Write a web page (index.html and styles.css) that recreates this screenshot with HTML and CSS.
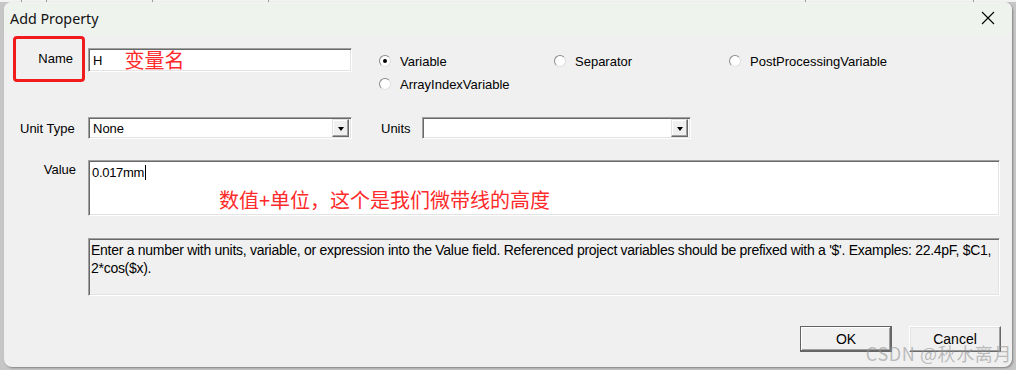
FILE: index.html
```html
<!DOCTYPE html>
<html>
<head>
<meta charset="utf-8">
<link rel="stylesheet" href="styles.css">
</head>
<body>
<div class="topstrip"><span class="tl l1"></span><span class="tl l2"></span><span class="tl l3"></span><span class="tl l4"></span><span class="tl l5"></span><span class="tl l6"></span></div>
<div class="dialog">
  <div class="titlebar">
    <span class="title">Add Property</span>
    <svg class="close" width="14" height="14" viewBox="0 0 14 14"><path d="M1 1 L13 13 M13 1 L1 13" stroke="#000" stroke-width="1.1" fill="none"/></svg>
  </div>
  <div class="body">
    <div class="row1">
      <div class="namebox"><span>Name</span></div>
      <div class="field name-input"><span class="val">H</span><span class="anno anno1">变量名</span></div>
      <div class="radios">
        <label class="radio"><span class="dot on"></span>Variable</label>
        <label class="radio"><span class="dot"></span>Separator</label>
        <label class="radio"><span class="dot"></span>PostProcessingVariable</label>
        <label class="radio"><span class="dot"></span>ArrayIndexVariable</label>
      </div>
    </div>
    <div class="row2">
      <span class="lbl lbl-left">Unit Type</span>
      <div class="field select sel1"><span class="val">None</span><span class="arrow"><span class="tri"></span></span></div>
      <span class="lbl units">Units</span>
      <div class="field select sel2"><span class="val"></span><span class="arrow"><span class="tri"></span></span></div>
    </div>
    <div class="row3">
      <span class="lbl lbl-right">Value</span>
      <div class="field valuebox">
        <div class="val">0.017mm<span class="caret"></span></div>
        <div class="anno anno2">数值+单位，这个是我们微带线的高度</div>
      </div>
    </div>
    <div class="row4">
      <div class="field helpbox">Enter a number with units, variable, or expression into the Value field. Referenced project variables should be prefixed with a '$'. Examples: 22.4pF, $C1, 2*cos($x).</div>
    </div>
    <div class="row5">
      <button class="btn default">OK</button>
      <button class="btn">Cancel</button>
    </div>
    <div class="watermark">CSDN @秋水离月</div>
  </div>
</div>
</body>
</html>
```
FILE: styles.css
```css
html, body { margin: 0; padding: 0; }
body {
  width: 1016px; height: 370px; overflow: hidden;
  background: #c6c6c6;
  font-family: "Liberation Sans", Arial, sans-serif;
  position: relative;
}
.topstrip { height: 2px; background: #f2f2f2; position: relative; }
.tl { position: absolute; top: 0; width: 1px; height: 2px; background: #9a9a9a; }
.l1 { left: 21px; } .l2 { left: 46px; } .l3 { left: 152px; } .l4 { left: 268px; } .l5 { left: 805px; } .l6 { left: 973px; }
.dialog {
  margin-left: 4px;
  width: 1008px; height: 365px;
  border-radius: 8px;
  overflow: hidden;
  background: #f0f0f0;
  box-shadow: 1px 1px 2px rgba(0,0,0,0.35);
  position: relative;
}
.titlebar {
  height: 32px; background: #eef3ee;
  display: flex; align-items: center; justify-content: space-between;
  padding: 0 17px 0 6px;
}
.title { font-family: "Noto Sans", "Open Sans", sans-serif; font-size: 14.3px; color: #111; }
.close { display: block; }
.body { position: relative; height: 333px; padding: 2px 11px 0 9px; box-sizing: border-box; font-size: 13px; color: #000; }

.field {
  background: #fff;
  border: 1px solid; border-color: #a0a0a0 #fff #fff #a0a0a0;
  box-shadow: inset 1px 1px 0 #696969, inset -1px -1px 0 #e3e3e3;
  box-sizing: border-box;
}
.val { font-size: 13px; }

.row1 { display: flex; height: 81px; }
.namebox {
  width: 72px; height: 46px; box-sizing: border-box;
  border: 3px solid #f01c1c; border-radius: 4px;
  display: flex; align-items: center; justify-content: flex-end;
  padding: 0 9px 2px 0;
}
.name-input {
  margin: 12px 0 0 3px; width: 264px; height: 24px;
  display: flex; align-items: center; padding-left: 4px;
}
.anno { color: #ff2a2a; font-family: "Noto Sans CJK SC", sans-serif; }
.anno1 { font-size: 20px; margin-left: 22px; line-height: 20px; }
.radios {
  margin: 15px 0 0 27px;
  display: grid; grid-template-columns: 175px 175px 175px;
  grid-auto-rows: 20px; row-gap: 3px; align-content: start;
}
.radio { display: flex; align-items: center; gap: 9px; }
.dot {
  width: 12px; height: 12px; border-radius: 50%; box-sizing: border-box;
  background: #fff;
  border: 1px solid; border-color: #8a8a8a #e0e0e0 #e0e0e0 #8a8a8a;
  display: flex; align-items: center; justify-content: center;
}
.dot.on::after { content: ""; width: 4px; height: 4px; border-radius: 50%; background: #000; }

.row2 { display: flex; align-items: center; height: 22px; }
.lbl { font-size: 13px; }
.lbl-left { width: 75px; padding-left: 7px; box-sizing: border-box; }
.select { height: 22px; display: flex; align-items: center; justify-content: space-between; padding: 2px 2px 2px 4px; }
.sel1 { width: 264px; }
.units { margin-left: 29px; width: 41px; }
.sel2 { width: 269px; }
.arrow {
  width: 17px; height: 18px; box-sizing: border-box; background: #f0f0f0;
  border: 1px solid; border-color: #e3e3e3 #696969 #696969 #e3e3e3;
  box-shadow: inset -1px -1px 0 #a0a0a0, inset 1px 1px 0 #fff;
  display: flex; align-items: center; justify-content: center;
}
.tri { width: 0; height: 0; border-left: 3.5px solid transparent; border-right: 3.5px solid transparent; border-top: 4px solid #000; margin-top: 1px; }

.row3 { display: flex; margin-top: 21px; }
.lbl-right { width: 75px; text-align: right; padding: 2px 12px 0 0; box-sizing: border-box; }
.valuebox { width: 912px; height: 56px; padding: 3px 0 0 3px; }
.valuebox .val { display: flex; align-items: center; height: 16px; letter-spacing: -0.3px; }
.caret { display: inline-block; width: 1px; height: 15px; background: #000; margin-left: 1px; }
.anno2 { font-size: 20px; line-height: 22px; margin: 9px 0 0 127px; }

.row4 { margin-top: 22px; padding-left: 75px; }
.helpbox {
  width: 912px; height: 58px; background: #f0f0f0;
  font-size: 14px; line-height: 18px; padding: 2px 4px 0 2px; letter-spacing: -0.28px;
}

.row5 { display: flex; justify-content: flex-end; gap: 17px; margin-top: 30px; }
.btn {
  width: 92px; height: 26px; box-sizing: border-box;
  background: #f0f0f0; font-family: "Liberation Sans", Arial, sans-serif; font-size: 14px; color: #000;
  border: 1px solid; border-color: #fff #696969 #696969 #fff;
  box-shadow: inset -1px -1px 0 #a0a0a0, inset 1px 1px 0 #e3e3e3;
  padding: 0;
}
.btn.default { border-color: #646464; box-shadow: inset -1px -1px 0 #696969, inset 1px 1px 0 #fff, inset -2px -2px 0 #a0a0a0; }
.watermark {
  position: absolute; right: 0; bottom: 4px;
  font-family: "Noto Sans CJK SC", sans-serif; font-size: 18px; line-height: 20px;
  color: rgba(150,150,150,0.6); letter-spacing: 0.6px;
}
```
